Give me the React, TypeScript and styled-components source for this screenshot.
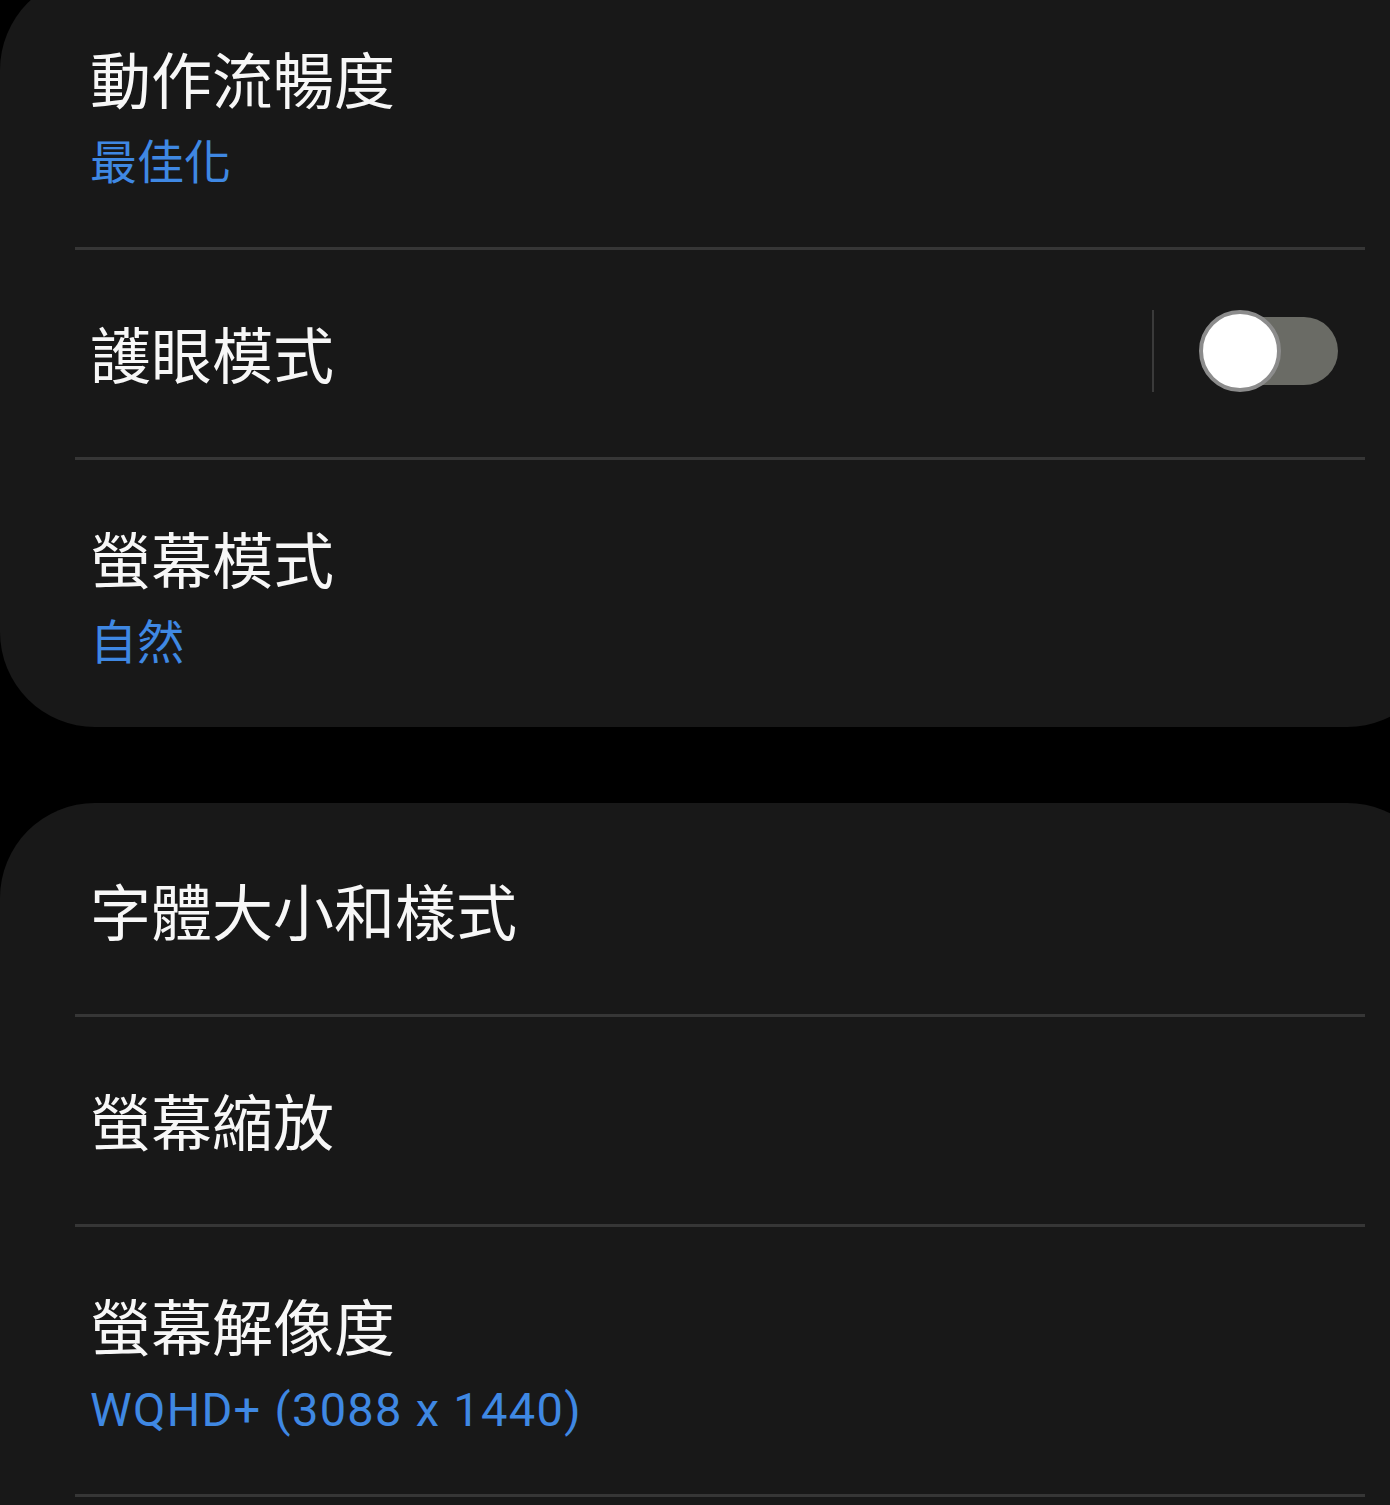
import React from "react";
import styled, { createGlobalStyle } from "styled-components";

const GlobalStyle = createGlobalStyle`
  html, body {
    margin: 0;
    padding: 0;
    background: #000000;
  }
  body {
    font-family: Roboto, "Noto Sans CJK TC", "Noto Sans", sans-serif;
    -webkit-font-smoothing: antialiased;
  }
`;

const Screen = styled.div`
  width: 1390px;
  height: 1505px;
  overflow: hidden;
  background: #000000;
  display: flex;
  flex-direction: column;
  gap: 76px;
`;

const Card = styled.section<{ $first?: boolean }>`
  background: #181818;
  border-radius: 95px;
  width: 1442px;
  margin-top: ${(p) => (p.$first ? "-25px" : "0")};
  display: flex;
  flex-direction: column;
  flex-shrink: 0;
`;

const Row = styled.div<{ $twoLine?: boolean; $lead?: boolean }>`
  display: flex;
  align-items: center;
  padding-left: 90px;
  padding-right: 104px;
  padding-top: ${(p) =>
    p.$lead ? (p.$twoLine ? "63px" : "67px") : p.$twoLine ? "58px" : "63px"};
  padding-bottom: ${(p) => (p.$twoLine ? "49px" : "54px")};
`;

const TextBlock = styled.div`
  flex: 1;
  display: flex;
  flex-direction: column;
  min-width: 0;
`;

const Title = styled.div`
  color: #f7f7f7;
  font-size: 61px;
  line-height: 90px;
  font-weight: 400;
  white-space: nowrap;
`;

const Subtitle = styled.div<{ $latin?: boolean }>`
  color: #3f88e3;
  font-size: 47px;
  line-height: 70px;
  font-weight: 400;
  letter-spacing: ${(p) => (p.$latin ? "1.3px" : "0")};
  white-space: nowrap;
`;

const Divider = styled.div`
  height: 3px;
  background: #363636;
  margin: 0 77px 0 75px;
`;

const ToggleArea = styled.div`
  display: flex;
  align-items: center;
  margin-top: -14px;
`;

const VLine = styled.div`
  width: 2px;
  height: 82px;
  background: #3a3a3a;
  margin-right: 45px;
`;

const SwitchWrap = styled.div`
  position: relative;
  width: 139px;
  height: 82px;
  display: flex;
  align-items: center;
  justify-content: flex-end;
`;

const Track = styled.div`
  width: 130px;
  height: 68px;
  border-radius: 34px;
  background: #6a6b65;
`;

const Thumb = styled.div`
  position: absolute;
  left: 0;
  top: 0;
  width: 74px;
  height: 74px;
  border-radius: 50%;
  background: #ffffff;
  border: 4px solid #8c8c8c;
`;

type Item = { title: string; sub?: string; latin?: boolean; toggle?: boolean };

const group1: Item[] = [
  { title: "動作流暢度", sub: "最佳化" },
  { title: "護眼模式", toggle: true },
  { title: "螢幕模式", sub: "自然" },
];

const group2: Item[] = [
  { title: "字體大小和樣式" },
  { title: "螢幕縮放" },
  { title: "螢幕解像度", sub: "WQHD+ (3088 x 1440)", latin: true },
];

function Toggle() {
  return (
    <ToggleArea>
      <VLine />
      <SwitchWrap>
        <Track />
        <Thumb />
      </SwitchWrap>
    </ToggleArea>
  );
}

function Group({ items, first, trailingDivider }: { items: Item[]; first?: boolean; trailingDivider?: boolean }) {
  return (
    <Card $first={first}>
      {items.map((it, i) => (
        <React.Fragment key={it.title}>
          {i > 0 && <Divider />}
          <Row $twoLine={!!it.sub} $lead={i === 0}>
            <TextBlock>
              <Title>{it.title}</Title>
              {it.sub && <Subtitle $latin={it.latin}>{it.sub}</Subtitle>}
            </TextBlock>
            {it.toggle && <Toggle />}
          </Row>
        </React.Fragment>
      ))}
      {trailingDivider && <Divider />}
      {trailingDivider && (
        <Row>
          <TextBlock>
            <Title>&nbsp;</Title>
          </TextBlock>
        </Row>
      )}
    </Card>
  );
}

export default function App() {
  return (
    <>
      <GlobalStyle />
      <Screen>
        <Group items={group1} first />
        <Group items={group2} trailingDivider />
      </Screen>
    </>
  );
}
